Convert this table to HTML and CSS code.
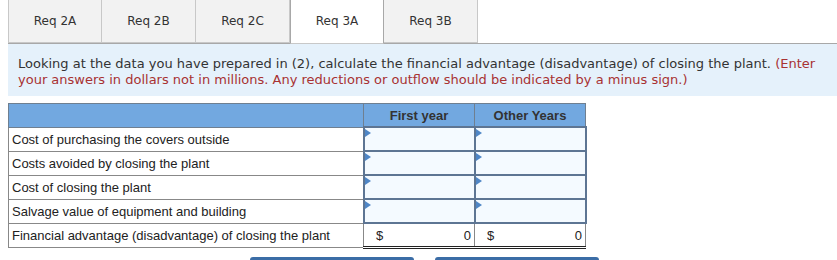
FILE: index.html
```html
<!DOCTYPE html>
<html lang="en">
<head>
  <meta charset="UTF-8" />
  <title>Req 3A</title>
  <link rel="stylesheet" href="styles.css">
</head>
<body>
  <div class="tabs">
    <div class="tab">Req 2A</div>
    <div class="tab">Req 2B</div>
    <div class="tab">Req 2C</div>
    <div class="tab active">Req 3A</div>
    <div class="tab">Req 3B</div>
  </div>

  <div class="prompt">
    Looking at the data you have prepared in (2), calculate the financial advantage (disadvantage) of closing the plant.
    <span class="hint">(Enter your answers in dollars not in millions. Any reductions or outflow should be indicated by a minus sign.)</span>
  </div>

  <table class="answers">
    <thead>
      <tr>
        <th class="label"></th>
        <th>First year</th>
        <th>Other Years</th>
      </tr>
    </thead>
    <tbody>
      <tr>
        <td class="label">Cost of purchasing the covers outside</td>
        <td class="input"></td>
        <td class="input"></td>
      </tr>
      <tr>
        <td class="label">Costs avoided by closing the plant</td>
        <td class="input"></td>
        <td class="input"></td>
      </tr>
      <tr>
        <td class="label">Cost of closing the plant</td>
        <td class="input"></td>
        <td class="input"></td>
      </tr>
      <tr>
        <td class="label">Salvage value of equipment and building</td>
        <td class="input"></td>
        <td class="input"></td>
      </tr>
      <tr class="total">
        <td class="label">Financial advantage (disadvantage) of closing the plant</td>
        <td class="sum"><span class="cur">$</span><span>0</span></td>
        <td class="sum"><span class="cur">$</span><span>0</span></td>
      </tr>
    </tbody>
  </table>

  <div class="nav">
    <div class="btn prev"></div>
    <div class="btn next"></div>
  </div>
</body>
</html>
```

FILE: styles.css
```css
body {
  margin: 0;
  padding: 0 0 0 8px;
  background: #fff;
  font-family: "DejaVu Sans", Verdana, sans-serif;
  color: #333;
  overflow: hidden;
}

/* tab strip */
.tabs {
  display: flex;
  height: 43px;
  border-bottom: 1px solid #a8a8a8;
}

.tab {
  width: 94px;
  box-sizing: border-box;
  display: flex;
  align-items: center;
  justify-content: center;
  padding-bottom: 1px;
  background: #f2f2f2;
  border: 1px solid #c8c8c8;
  border-top: none;
  border-left: none;
  font-size: 12px;
  color: #333;
}

.tab:first-child {
  border-left: 1px solid #c8c8c8;
}

.tab.active {
  background: #fff;
  border-left: 1px solid #a8a8a8;
  border-right: 1px solid #a8a8a8;
  margin-bottom: -1px;
  height: 44px;
}

/* instructions */
.prompt {
  background: #e5f1fb;
  padding: 12px 10px 8px 10px;
  font-size: 13px;
  line-height: 16px;
  color: #333;
}

.hint {
  color: #a83232;
}

/* answer grid */
.answers {
  margin-top: 7px;
  border-collapse: collapse;
  font-family: "Liberation Sans", Arial, sans-serif;
  font-size: 13px;
  color: #222;
}

.answers th {
  background: #72a8e0;
  height: 22px;
  padding: 0;
  border: 1px solid #6f7f90;
  font-size: 13px;
  font-weight: bold;
  color: #333;
  width: 110px;
}

.answers th.label {
  width: 354px;
}

.answers td {
  height: 22px;
  padding: 0;
  border: 1px solid #888;
}

.answers td.label {
  padding-left: 3px;
}

.answers td.input {
  background: #f4faff;
  border: 2px solid #5d7593;
  position: relative;
}

/* little marker in the corner of each entry cell */
.answers td.input::before {
  content: "";
  position: absolute;
  top: 1px;
  left: 0;
  border-top: 4px solid transparent;
  border-bottom: 4px solid transparent;
  border-left: 6px solid #4f86c6;
}

.answers tr.total td.sum {
  border-bottom: 3px double #222;
  padding: 0 3px 0 12px;
}

.sum span:last-child {
  float: right;
}

.nav {
  display: flex;
  gap: 21px;
  margin: 8px 0 0 242px;
}

.btn {
  width: 164px;
  height: 20px;
  border-radius: 3px;
  background: #3b6da6;
}
```
